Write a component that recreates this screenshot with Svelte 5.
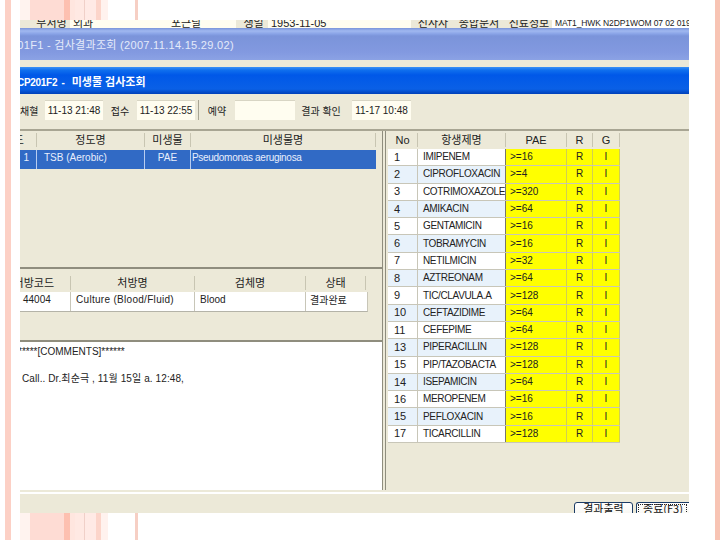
<script>
  const stripes = [
    { w: 10, c: '#fff3ef' }, { w: 34, c: '#fedcd4' }, { w: 6, c: '#fdc0b0' }, { w: 5, c: '#ffe6df' },
    { w: 9, c: '#ffe9e3' }, { w: 1, c: '#f0d0c8' }, { w: 11, c: '#ffeae5' }, { w: 5, c: '#fcd5ca' },
    { w: 7, c: '#fff2ee' }, { w: 27, c: '#ffffff' }, { w: 3, c: '#f6cfc4' }
  ]

  const drugs = [
    ['1', 'IMIPENEM', '>=16'],
    ['2', 'CIPROFLOXACIN', '>=4'],
    ['3', 'COTRIMOXAZOLE', '>=320'],
    ['4', 'AMIKACIN', '>=64'],
    ['5', 'GENTAMICIN', '>=16'],
    ['6', 'TOBRAMYCIN', '>=16'],
    ['7', 'NETILMICIN', '>=32'],
    ['8', 'AZTREONAM', '>=64'],
    ['9', 'TIC/CLAVULA.A', '>=128'],
    ['10', 'CEFTAZIDIME', '>=64'],
    ['11', 'CEFEPIME', '>=64'],
    ['13', 'PIPERACILLIN', '>=128'],
    ['15', 'PIP/TAZOBACTA', '>=128'],
    ['14', 'ISEPAMICIN', '>=64'],
    ['16', 'MEROPENEM', '>=16'],
    ['15', 'PEFLOXACIN', '>=16'],
    ['17', 'TICARCILLIN', '>=128']
  ]
</script>

{#snippet deco()}
  <div class="deco">
    {#each stripes as s}
      <span style="width:{s.w}px;background:{s.c}"></span>
    {/each}
  </div>
{/snippet}

<div class="page">
  {@render deco()}

  <div class="shot">
    <div class="cutoff">
      <span class="cut beige" style="width:10px"></span>
      <span class="cut beige" style="width:40px">부서명</span>
      <span class="cut" style="width:98px">외과</span>
      <span class="cut" style="width:68px">포근날</span>
      <span class="cut beige" style="width:32px">생일</span>
      <span class="cut" style="width:143px">1953-11-05</span>
      <span class="cut beige" style="width:41px">진사자</span>
      <span class="cut beige" style="width:51px">종합문서</span>
      <span class="cut beige" style="width:49px">진료정보</span>
      <span class="cut white" style="width:137px">MAT1_HWK N2DP1WOM 07 02 019</span>
    </div>

    <div class="title inactive"><span>CP201F1 - 검사결과조회 (2007.11.14.15.29.02)</span></div>
    <div class="title active"><span><small>CP201F2 -</small>미생물 검사조회</span></div>

    <div class="fields">
      <span class="lbl first" style="width:25px">채혈</span>
      <span class="val" style="width:58px">11-13 21:48</span>
      <span class="lbl" style="width:34px">접수</span>
      <span class="val" style="width:58px">11-13 22:55</span>
      <span class="lbl sep" style="width:37px">예약</span>
      <span class="val" style="width:60px"></span>
      <span class="lbl" style="width:52px">결과 확인</span>
      <span class="val" style="width:59px">11-17 10:48</span>
    </div>

    <div class="main">
      <div class="left">
        <div class="upper">
          <div class="head upper-cols">
            <span class="clip-a">코드</span><span>정도명</span><span>미생물</span><span>미생물명</span>
          </div>
          <div class="selected upper-cols">
            <span class="r">1</span><span class="pad">TSB (Aerobic)</span><span class="c">PAE</span><span class="org">Pseudomonas aeruginosa</span>
          </div>
        </div>
        <div class="middle">
          <div class="head lower-cols">
            <span class="clip-b">처방코드</span><span>처방명</span><span>검체명</span><span>상태</span>
          </div>
          <div class="order lower-cols">
            <span>44004</span><span class="wide">Culture (Blood/Fluid)</span><span>Blood</span><span>결과완료</span>
          </div>
        </div>
        <div class="comments">
          <p class="clip-comments">*****[COMMENTS]******</p>
          <p class="note">Call.. Dr.최순극 , 11월 15일 a. 12:48,</p>
        </div>
      </div>

      <div class="right">
        <div class="grid">
          <div class="head drug-cols">
            <span>No</span><span>항생제명</span><span>PAE</span><span>R</span><span>G</span>
          </div>
          {#each drugs as d, i}
            <div class="drug drug-cols" class:tint={i % 2 === 1}>
              <span class="no">{d[0]}</span>
              <span class="name">{d[1]}</span>
              <span class="y">{d[2]}</span>
              <span class="y c">R</span>
              <span class="y c">I</span>
            </div>
          {/each}
        </div>
      </div>
    </div>

    <div class="footer">
      <button>결과출력</button>
      <button class="focus">종료(F3)</button>
    </div>
  </div>

  {@render deco()}
</div>

<style>
  :global(body) { margin: 0; background: #fff; }

  .page {
    width: 720px;
    height: 540px;
    overflow: hidden;
    display: flex;
    flex-direction: column;
    font-family: "Liberation Sans", "Noto Sans CJK KR", sans-serif;
    font-size: 10px;
    color: #222;
    background:
      linear-gradient(#fcd0c5, #fcd0c5) 5px 0 / 6px 100% no-repeat,
      linear-gradient(#f8c4b4, #f8c4b4) 715px 0 / 5px 100% no-repeat,
      #fff;
  }

  .deco { height: 20px; padding-left: 20px; display: flex; flex: none; }
  .deco:last-child { height: 27px; }

  .shot {
    width: 669px;
    height: 493px;
    margin-left: 20px;
    background: #ece9d8;
    display: flex;
    flex-direction: column;
    overflow: hidden;
  }

  .cutoff { height: 8px; display: flex; flex: none; overflow: hidden; }
  .cut {
    height: 8px;
    line-height: 6px;
    padding-left: 3px;
    box-sizing: border-box;
    background: #fffdf0;
    white-space: nowrap;
    overflow: hidden;
    font-size: 11px;
  }
  .cut.beige { background: #ece9d8; text-align: center; }
  .cut.white { background: #fff; font-size: 8.5px; letter-spacing: -0.1px; }

  .title {
    flex: none;
    display: flex;
    align-items: center;
    overflow: hidden;
    white-space: nowrap;
    color: #fff;
    font-size: 11px;
  }
  .inactive {
    height: 32px;
    color: #e4eafa;
    letter-spacing: 0.3px;
    background: linear-gradient(#7a94da 0, #a0b8f0 3px, #88a2e6 6px, #7b94da 8px, #8299e0 24px, #8ba2e4 100%);
  }
  .inactive span { margin-left: -25px; }
  .active {
    height: 27px;
    margin-top: 7px;
    font-weight: bold;
    background: linear-gradient(#3a90f6 0, #1070ee 3px, #0058e8 8px, #0a60e6 22px, #0040b8 100%);
  }
  .active span { margin-left: -3px; }
  .active small { font-size: 10px; letter-spacing: -0.3px; word-spacing: 2px; margin-right: 7px; }

  .fields { height: 20px; margin-top: 6px; display: flex; flex: none; font-size: 10px; }
  .lbl, .val { display: flex; align-items: center; justify-content: center; white-space: nowrap; }
  .val { background: #fffdf0; border-top: 1px solid #d8d5c4; box-sizing: border-box; }
  .lbl { font-size: 10px; }
  .first { justify-content: flex-start; }
  .sep { border-left: 1px solid #a8a593; margin-left: 3px; box-sizing: border-box; }
  .fields .val:last-child { margin-left: 5px; }

  .main { height: 361px; display: flex; flex: none; margin-top: 9px; border-top: 2px solid #a8a593; box-sizing: border-box; }
  .left { width: 362px; flex: none; display: flex; flex-direction: column; }

  .upper { height: 136px; flex: none; }
  .middle { height: 73px; flex: none; border-top: 2px solid #8f8d7e; padding-top: 5px; box-sizing: border-box; }
  .comments { flex: 1; background: #fff; border-top: 2px solid #8f8d7e; font-size: 10px; overflow: hidden; }
  .comments p { margin: 0; white-space: nowrap; }
  .clip-comments { margin-left: -2px !important; padding-top: 4px; }
  .note { margin-top: 13px !important; padding-left: 2px; letter-spacing: 0.1px; }

  .head { height: 18px; display: grid; align-items: center; text-align: center; font-size: 11px; white-space: nowrap; }
  .head span { border-right: 1px solid #c8c5b2; overflow: hidden; line-height: 14px; }
  .head .clip-a { direction: rtl; text-align: right; padding-right: 12px; }
  .head .clip-b { direction: rtl; text-align: right; padding-right: 16px; }

  .upper-cols { grid-template-columns: 17px 108px 46px 185px; }
  .lower-cols { grid-template-columns: 51px 124px 111px 60px; }

  .selected {
    height: 19px;
    width: 356px;
    margin-top: 1px;
    display: grid;
    align-items: center;
    background: #316ac5;
    color: #e8eefc;
    white-space: nowrap;
  }
  .selected span { border-right: 1px solid #b8cdf0; height: 100%; display: flex; align-items: center; padding: 0 0 5px 4px; box-sizing: border-box; overflow: hidden; }
  .selected .pad { padding-left: 7px; }
  .selected .org { border-right: none; padding-left: 1px; letter-spacing: -0.3px; }
  .selected .r { justify-content: flex-end; padding-right: 7px; }
  .selected .c { justify-content: center; padding-left: 0; }

  .order {
    width: 347px;
    height: 19px;
    display: grid;
    background: #fff;
    border-bottom: 1px solid #b4b3a8;
    border-right: 1px solid #c8c6b8;
    align-items: center;
    white-space: nowrap;
    font-size: 10px;
  }
  .order span { height: 100%; display: flex; align-items: center; border-right: 1px solid #c8c6b8; padding: 0 0 4px 5px; box-sizing: border-box; overflow: hidden; }
  .order span:first-child { padding-left: 3px; }
  .order span:last-child { border-right: none; padding-left: 4px; }
  .order .wide { letter-spacing: 0.3px; }

  .right { flex: 1; border-left: 4px double #8f8d7e; padding-left: 2px; box-sizing: border-box; }
  .grid { width: 232px; }
  .drug-cols { grid-template-columns: 30px 88px 61px 26px 27px; }
  .drug {
    height: 17.3px;
    box-sizing: border-box;
    display: grid;
    border-bottom: 1px solid #c8c6b8;
    background: #fff;
    white-space: nowrap;
  }
  .drug.tint { background: #e8f2fb; }
  .drug span { display: flex; align-items: center; overflow: hidden; border-right: 1px solid #c8c6b8; padding-bottom: 1px; box-sizing: border-box; }
  .no { padding-left: 6px; font-size: 11px; }
  .name { padding-left: 5px; letter-spacing: -0.35px; border-right: 1px solid #77766c !important; }
  .y { background: #ffff00; padding-left: 4px; border-color: #d2cf50 !important; }
  .y.c { justify-content: center; padding-left: 0; }

  .footer {
    flex: 1;
    margin-top: 2px;
    border-top: 2px solid #fff;
    display: flex;
    justify-content: flex-end;
    align-items: flex-start;
    gap: 3px;
    padding-top: 8px;
    box-sizing: border-box;
  }
  button {
    width: 59px;
    height: 22px;
    flex: none;
    border: 1px solid #1c3c66;
    border-radius: 3px;
    background: linear-gradient(#fff, #f4f2ea);
    font: 11px "Noto Sans CJK KR", "Liberation Sans", sans-serif;
    padding: 0 0 10px;
    color: #111;
    line-height: 10px;
    display: block;
  }
  .focus { width: 53px; border-right: 0; border-radius: 3px 0 0 3px; outline: 1px dotted #222; outline-offset: -3px; }
</style>
